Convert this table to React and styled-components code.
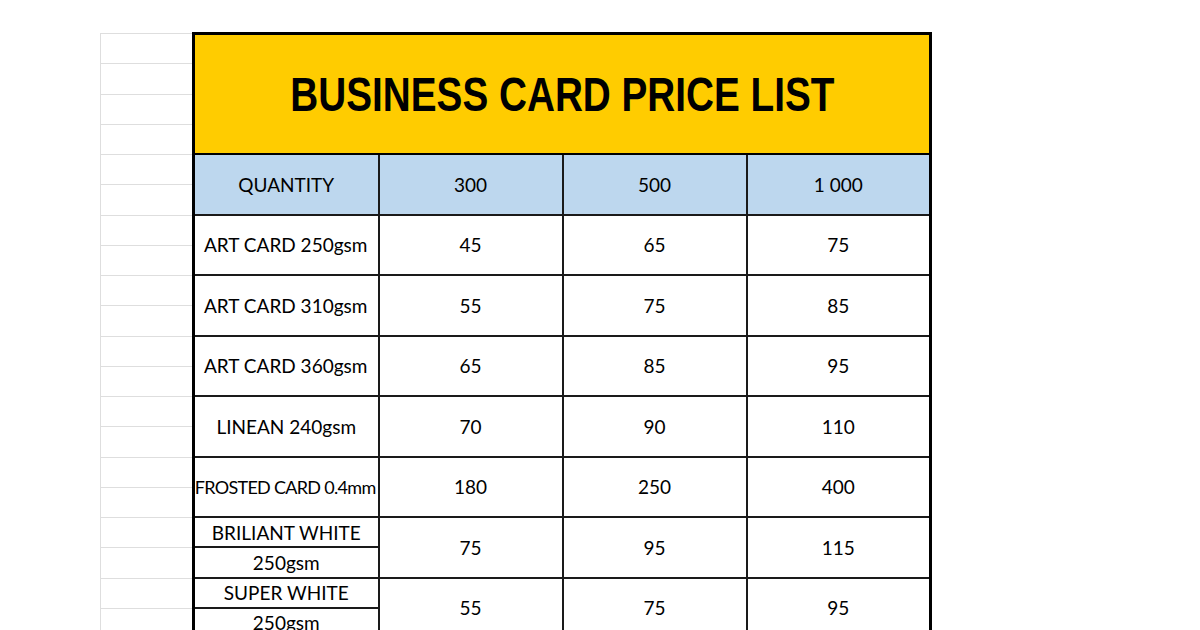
import styled, {createGlobalStyle} from 'styled-components';

const GlobalStyle = createGlobalStyle`
    html, body {
        margin: 0;
        padding: 0;
        background: #fff;
    }
    body {
        width: 1200px;
        height: 630px;
        overflow: hidden;
        font-family: Lato, "Liberation Sans", sans-serif;
    }
`;

const ROW = 30.25;

const priceRows = [
    {name: 'ART CARD 250gsm', prices: ['45', '65', '75'], align: 'left'},
    {name: 'ART CARD 310gsm', prices: ['55', '75', '85'], align: 'left'},
    {name: 'ART CARD 360gsm', prices: ['65', '85', '95'], align: 'left'},
    {name: 'LINEAN 240gsm', prices: ['70', '90', '110']},
    {name: 'FROSTED CARD 0.4mm', prices: ['180', '250', '400'], align: 'right', tight: true},
    {name: ['BRILIANT WHITE', '250gsm'], prices: ['75', '95', '115']},
    {name: ['SUPER WHITE', '250gsm'], prices: ['55', '75', '95']},
];

const justify = {left: 'flex-start', right: 'flex-end', center: 'center'};

const Page = styled.div`
    display: flex;
    align-items: flex-start;
    padding: 32px 0 0 100px;
`;

const Gutter = styled.div`
    width: 91px;
    margin-top: 1px;
    border-left: 1px solid #dedede;
    border-top: 1px solid #dedede;
    display: flex;
    flex-direction: column;
`;

const GutterCell = styled.div`
    height: ${ROW - 1}px;
    border-bottom: 1px solid #dedede;
`;

const Sheet = styled.table`
    width: 739px;
    border-collapse: collapse;
    table-layout: fixed;
    border: 3px solid #000;
    color: #000;
    font-size: 19px;
`;

const TitleCell = styled.th`
    height: ${ROW * 4 - 3}px;
    background: #ffcc00;
    border: 2px solid #000;
    padding: 0;
    text-align: center;
    vertical-align: middle;
`;

const TitleText = styled.span`
    display: inline-block;
    font-family: "Liberation Sans", Arial, sans-serif;
    font-weight: bold;
    font-size: 49px;
    transform: scaleX(0.79);
    white-space: nowrap;
`;

const HeadCell = styled.td`
    height: ${ROW * 2 - 2}px;
    background: #bdd7ee;
    border: 2px solid #1a1a1a;
    padding: 0;
    text-align: center;
    vertical-align: middle;
`;

const Cell = styled.td`
    height: ${props => props.$half ? ROW - 2 : ROW * 2 - 2}px;
    border: 2px solid #1a1a1a;
    padding: 0;
    vertical-align: middle;
    white-space: nowrap;
    overflow: hidden;
    line-height: 1;
`;

const CellText = styled.div`
    display: flex;
    justify-content: ${props => justify[props.$align || 'center']};
    padding: ${props => props.$align === 'left' ? '0 0 0 9px' : props.$align === 'right' ? '0 2px 0 0' : '0'};
    font-size: ${props => props.$tight ? '18px' : 'inherit'};
    letter-spacing: ${props => props.$tight ? '-0.7px' : 'normal'};
`;

function App() {
    return (
        <>
            <GlobalStyle/>
            <Page>
                <Gutter>
                    {Array.from({length: 20}).map((_, i) => <GutterCell key={i}/>)}
                </Gutter>
                <Sheet>
                    <colgroup>
                        <col style={{width: 185}}/>
                        <col style={{width: 184}}/>
                        <col style={{width: 184}}/>
                        <col style={{width: 184}}/>
                    </colgroup>
                    <thead>
                    <tr>
                        <TitleCell colSpan={4}>
                            <TitleText>BUSINESS CARD PRICE LIST</TitleText>
                        </TitleCell>
                    </tr>
                    </thead>
                    <tbody>
                    <tr>
                        <HeadCell>QUANTITY</HeadCell>
                        <HeadCell>300</HeadCell>
                        <HeadCell>500</HeadCell>
                        <HeadCell>1 000</HeadCell>
                    </tr>
                    {priceRows.map((row, index) => {
                        const split = Array.isArray(row.name);
                        return [
                            <tr key={`${index}-a`}>
                                <Cell rowSpan={split ? 1 : 2} $half={split}>
                                    <CellText $align={row.align} $tight={row.tight}>
                                        {split ? row.name[0] : row.name}
                                    </CellText>
                                </Cell>
                                {row.prices.map((price, i) => (
                                    <Cell key={i} rowSpan={2}>
                                        <CellText>{price}</CellText>
                                    </Cell>
                                ))}
                            </tr>,
                            <tr key={`${index}-b`}>
                                {split && (
                                    <Cell $half>
                                        <CellText>{row.name[1]}</CellText>
                                    </Cell>
                                )}
                            </tr>
                        ];
                    })}
                    </tbody>
                </Sheet>
            </Page>
        </>
    );
}

export default App;
